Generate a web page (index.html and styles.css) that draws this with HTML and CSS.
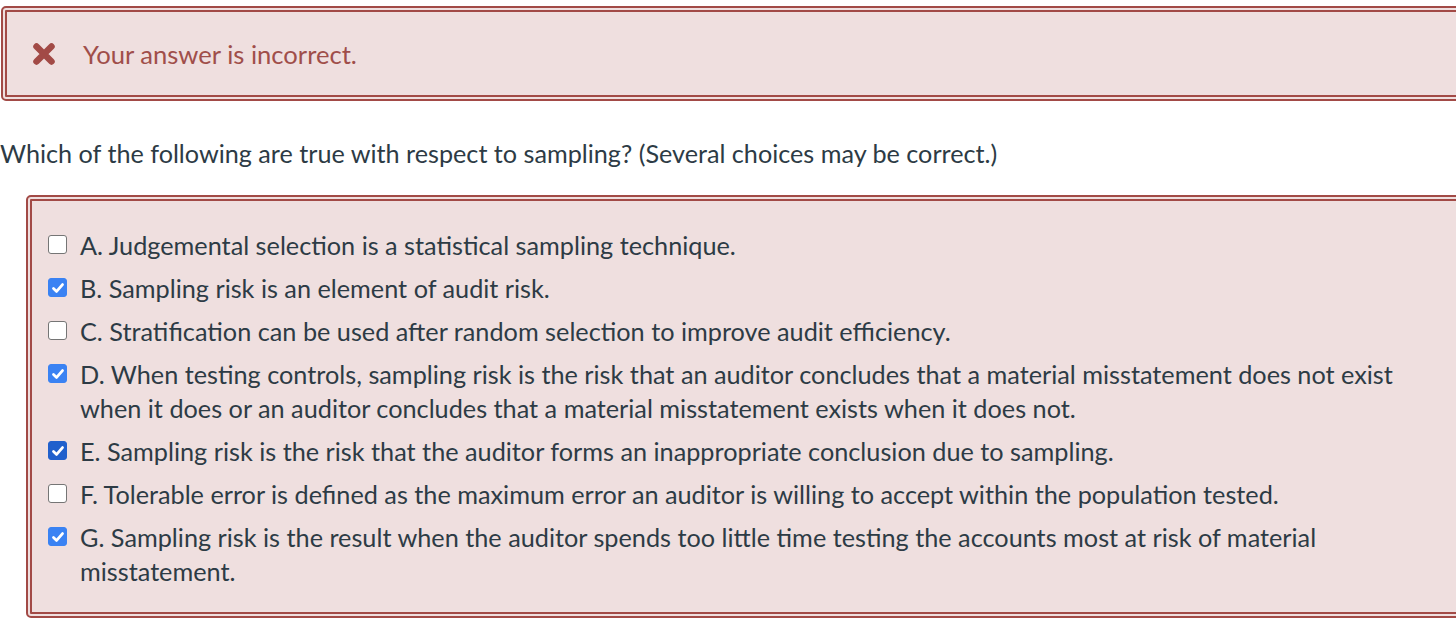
FILE: index.html
```html
<!DOCTYPE html>
<html lang="en">
<head>
    <meta charset="UTF-8">
    <meta name="viewport" content="width=device-width, initial-scale=1.0">
    <title>Sampling Question</title>
    <link rel="stylesheet" href="styles.css">
</head>
<body>
    <div class="banner">
        <svg class="x-icon" xmlns="http://www.w3.org/2000/svg" viewBox="0 0 24 24"><path d="M4.5 4.5L19.5 19.5M19.5 4.5L4.5 19.5"/></svg>
        <span class="banner-text">Your answer is incorrect.</span>
    </div>

    <p class="question">Which of the following are true with respect to sampling? (Several choices may be correct.)</p>

    <div class="answers">
        <label class="option">
            <span class="box"></span>
            <span class="option-text">A. Judgemental selection is a statistical sampling technique.</span>
        </label>
        <label class="option">
            <span class="box checked"><svg viewBox="0 0 18 18"><path d="M4.5 9.5L7.6 12.4L13.5 5.6"/></svg></span>
            <span class="option-text">B. Sampling risk is an element of audit risk.</span>
        </label>
        <label class="option">
            <span class="box"></span>
            <span class="option-text">C. Stratification can be used after random selection to improve audit efficiency.</span>
        </label>
        <label class="option">
            <span class="box checked"><svg viewBox="0 0 18 18"><path d="M4.5 9.5L7.6 12.4L13.5 5.6"/></svg></span>
            <span class="option-text">D. When testing controls, sampling risk is the risk that an auditor concludes that a material misstatement does not exist when it does or an auditor concludes that a material misstatement exists when it does not.</span>
        </label>
        <label class="option">
            <span class="box checked focused"><svg viewBox="0 0 18 18"><path d="M4.5 9.5L7.6 12.4L13.5 5.6"/></svg></span>
            <span class="option-text">E. Sampling risk is the risk that the auditor forms an inappropriate conclusion due to sampling.</span>
        </label>
        <label class="option">
            <span class="box"></span>
            <span class="option-text">F. Tolerable error is defined as the maximum error an auditor is willing to accept within the population tested.</span>
        </label>
        <label class="option">
            <span class="box checked"><svg viewBox="0 0 18 18"><path d="M4.5 9.5L7.6 12.4L13.5 5.6"/></svg></span>
            <span class="option-text">G. Sampling risk is the result when the auditor spends too little time testing the accounts most at risk of material misstatement.</span>
        </label>
    </div>
</body>
</html>
```

FILE: styles.css
```css
:root {
    --wrong-border: #a24a46;
    --wrong-bg: #efdfdf;
    --wrong-text: #a04e4a;
    --text-color: #2d3b45;
    --check-blue: #3a82f3;
    --check-blue-dark: #2160cc;
}

body {
    margin: 0;
    background: #fff;
    font-family: 'Lato', 'Noto Sans', sans-serif;
    color: var(--text-color);
    overflow-x: hidden;
}

.banner {
    box-sizing: border-box;
    display: flex;
    align-items: center;
    gap: 27px;
    width: 1490px;
    height: 95px;
    margin: 6px 0 0 1px;
    padding-left: 25px;
    background: var(--wrong-bg);
    border: 6px double var(--wrong-border);
    border-radius: 5px;
}

.x-icon {
    width: 24px;
    height: 24px;
    flex: none;
    fill: none;
    stroke: var(--wrong-border);
    stroke-width: 6.5;
    stroke-linecap: round;
}

.banner-text {
    font-size: 25.6px;
    line-height: 34px;
    color: var(--wrong-text);
}

.question {
    margin: 35px 0 25px;
    font-size: 25.2px;
    line-height: 34px;
}

.answers {
    box-sizing: border-box;
    display: flex;
    flex-direction: column;
    gap: 9px;
    width: 1460px;
    margin-left: 26px;
    padding: 27px 55px 24px 16px;
    background: var(--wrong-bg);
    border: 6px double var(--wrong-border);
    border-radius: 5px;
}

.option {
    display: flex;
    align-items: flex-start;
    gap: 13px;
    font-size: 25.25px;
    line-height: 34px;
}

.box {
    box-sizing: border-box;
    flex: none;
    display: flex;
    align-items: center;
    justify-content: center;
    width: 19px;
    height: 19px;
    margin-top: 7px;
    background: #fff;
    border: 1.5px solid #757575;
    border-radius: 3px;
}

.box.checked {
    background: var(--check-blue);
    border-color: var(--check-blue);
}

.box.focused {
    background: var(--check-blue-dark);
    border-color: var(--check-blue-dark);
}

.box svg {
    width: 18px;
    height: 18px;
    flex: none;
    fill: none;
    stroke: #fff;
    stroke-width: 2.8;
    stroke-linecap: round;
    stroke-linejoin: round;
}
```
